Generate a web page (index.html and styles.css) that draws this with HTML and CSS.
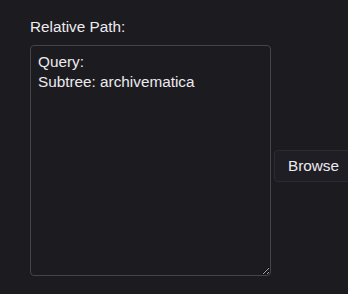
FILE: index.html
```html
<!DOCTYPE html>
<html lang="en">
<head>
    <meta charset="UTF-8">
    <meta name="viewport" content="width=device-width, initial-scale=1.0">
    <title>Relative Path</title>
    <link rel="stylesheet" href="styles.css">
</head>
<body>
    <div class="path-form">
        <label class="path-label" for="relpath">Relative Path:</label>
        <div class="path-row">
            <textarea id="relpath" class="path-input">Query:
Subtree: archivematica</textarea>
            <button class="browse-btn">Browse</button>
        </div>
    </div>
</body>
</html>
```

FILE: styles.css
```css
body {
    background-color: #1c1b20;
    margin: 0;
}
* {
    font-family: "Liberation Sans", Arial, sans-serif;
    box-sizing: border-box;
}
.path-form {
    padding: 18px 0 0 30px;
    width: 348px;
    overflow: hidden;
}
.path-label {
    display: block;
    color: #ecebef;
    font-size: 15.3px;
    line-height: 18px;
}
.path-row {
    display: flex;
    align-items: center;
    gap: 3px;
    margin-top: 9px;
}
.path-input {
    width: 241px;
    height: 231px;
    flex-shrink: 0;
    background-color: #1c1b20;
    color: #ecebef;
    border: 1px solid #454449;
    border-radius: 4px;
    padding: 6px 7px;
    font-size: 15.3px;
    line-height: 20px;
    resize: both;
    margin: 0;
}
.path-input:focus {
    outline: none;
}
.browse-btn {
    flex-shrink: 0;
    margin-top: 10px;
    height: 32px;
    padding: 0 13px;
    background-color: #1f1e24;
    color: #ecebef;
    border: 1px solid #2c2b31;
    border-radius: 4px;
    font-size: 15.3px;
}
```
